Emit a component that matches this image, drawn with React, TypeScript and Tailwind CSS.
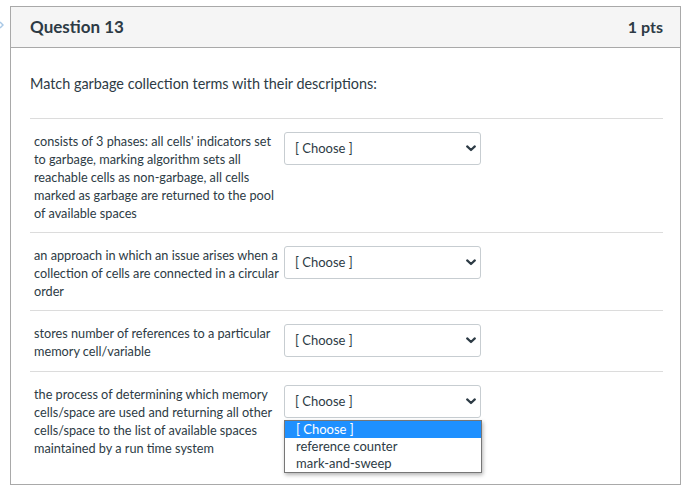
import React from "react";

const rows = [
  "consists of 3 phases: all cells' indicators set to garbage, marking algorithm sets all reachable cells as non-garbage, all cells marked as garbage are returned to the pool of available spaces",
  "an approach in which an issue arises when a collection of cells are connected in a circular order",
  "stores number of references to a particular memory cell/variable",
  "the process of determining which memory cells/space are used and returning all other cells/space to the list of available spaces maintained by a run time system",
];

function Chevron() {
  return (
    <svg width="10" height="7" viewBox="0 0 10 7" className="shrink-0">
      <path d="M1.2 1.4 L5 5 L8.8 1.4" fill="none" stroke="#2d3b45" strokeWidth="2.2" strokeLinecap="round" strokeLinejoin="round" />
    </svg>
  );
}

function Select({ open }: { open?: boolean }) {
  return (
    <div className="relative ml-[4px] mb-[14px] w-[197px] shrink-0">
      <div className="flex h-[33px] items-center justify-between rounded-[3px] border border-[#c7cdd1] bg-white pl-[10px] pr-[4px] text-[13px] text-[#2d3b45]">
        <span>[ Choose ]</span>
        <Chevron />
      </div>
      {open && (
        <div className="absolute left-0 top-[35px] z-10 w-[198px] border border-[#767676] bg-white text-[13px] leading-[17px] text-[#2d3b45] shadow-[1px_2px_4px_rgba(0,0,0,0.3)]">
          <div className="bg-[#1e90ff] pl-[11px] text-white">[ Choose ]</div>
          <div className="pl-[11px]">reference counter</div>
          <div className="pl-[11px]">mark-and-sweep</div>
        </div>
      )}
    </div>
  );
}

export default function App() {
  return (
    <div className="relative min-h-[491px] w-[683px] bg-white font-['Lato','Noto_Sans',sans-serif] text-[#2d3b45]">
      <svg className="absolute left-0 top-[21px]" width="4" height="8" viewBox="0 0 4 8">
        <path d="M0 1 L3 4 L0 7" fill="none" stroke="#a9c8e6" strokeWidth="1.5" />
      </svg>
      <div className="pt-[6px] pl-[10px]">
        <div className="w-[671px] border border-[#a9a9a9]">
          <div className="flex h-[41px] items-center justify-between border-b border-[#a9a9a9] bg-[#f5f5f5] pl-[19px] pr-[17px]">
            <span className="text-[17px] font-bold">Question 13</span>
            <span className="text-[16px] font-bold">1 pts</span>
          </div>
          <div className="pl-[19px] pr-[17px] pb-[17px]">
            <p className="pt-[26px] pb-[24px] text-[14.4px] leading-[20px]">
              Match garbage collection terms with their descriptions:
            </p>
            {rows.map((t, i) => (
              <div key={i} className="flex items-start border-t border-[#dcdcdc] pt-[13px] pl-[4px]">
                <div className="w-[246px] shrink-0 pb-[10px] text-[12.7px] leading-[18px]">{t}</div>
                <Select open={i === 3} />
              </div>
            ))}
          </div>
        </div>
      </div>
    </div>
  );
}
